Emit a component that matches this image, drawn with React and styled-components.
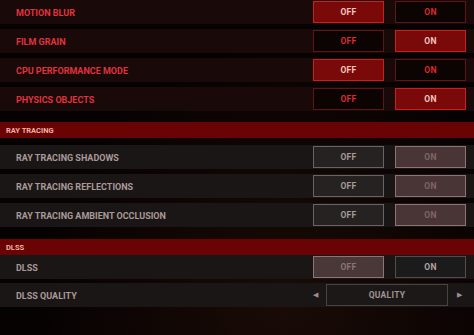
import React from 'react';
import styled, { createGlobalStyle, css } from 'styled-components';

const GlobalStyle = createGlobalStyle`
  html, body {
    margin: 0;
    padding: 0;
    background: #070202;
  }
  body {
    font-family: Roboto, "Liberation Sans", sans-serif;
    width: 474px;
    height: 335px;
    overflow: hidden;
  }
`;

const buttonStyles = {
  on: css`
    background: #7a0a0a;
    border-color: #c81f1f;
    color: #f2c6be;
  `,
  off: css`
    background: #0c0303;
    border-color: #5e1515;
    color: #dc2a2e;
  `,
  dimOff: css`
    background: #262222;
    border-color: #6c6262;
    color: #a89a98;
  `,
  dimOn: css`
    background: #4a3536;
    border-color: #8c7474;
    color: #7e6666;
  `,
  dlssSel: css`
    background: #4a3838;
    border-color: #8a7676;
    color: #8a7474;
  `,
  dlssOn: css`
    background: #1c1b1b;
    border-color: #524c4c;
    color: #b0a4a2;
  `,
};

const labelColors = {
  red: '#e0333c',
  gray: '#a99a98',
};

const rowBgs = {
  red: '#190909',
  gray: '#1b1616',
};

const Page = styled.div`
  display: flex;
  flex-direction: column;
  width: 474px;
  height: 335px;
  background: radial-gradient(ellipse at 60% 90%, #1a0b07 0%, #070202 60%);
`;

const Section = styled.div`
  display: flex;
  flex-direction: column;
  gap: ${(p) => p.$gap}px;
  margin-top: ${(p) => p.$top}px;
`;

const Header = styled.div`
  height: 16px;
  display: flex;
  align-items: center;
  padding-left: 6px;
  background: #6a0404;
  color: #efb2a6;
  font-size: 7.5px;
  font-weight: 700;
  margin-bottom: ${(p) => p.$after}px;
`;

const Row = styled.div`
  height: 24px;
  display: flex;
  align-items: center;
  padding: 0 8px 0 16px;
  background: ${(p) => rowBgs[p.$tone]};
  margin-top: ${(p) => p.$top || 0}px;
`;

const Label = styled.div`
  flex: 1;
  color: ${(p) => labelColors[p.$tone]};
  font-size: 9px;
  font-weight: 700;
  padding-top: 2px;
`;

const Toggles = styled.div`
  display: flex;
  gap: 11px;
`;

const Btn = styled.div`
  width: 69px;
  height: 20px;
  border: 1px solid;
  display: flex;
  align-items: center;
  justify-content: center;
  font-size: 8.5px;
  font-weight: 700;
  letter-spacing: 0.3px;
  ${(p) => buttonStyles[p.$variant]}
`;

const Selector = styled.div`
  display: flex;
  align-items: center;
  gap: 8px;
  margin-right: 4px;
`;

const Arrow = styled.span`
  color: #9a8e8e;
  font-size: 7px;
  width: 6px;
  display: flex;
  justify-content: center;
`;

const SelectBox = styled.div`
  width: 120px;
  height: 20px;
  border: 1px solid #4a4242;
  background: #1d1818;
  color: #a09494;
  display: flex;
  align-items: center;
  justify-content: center;
  font-size: 8.5px;
  font-weight: 700;
  letter-spacing: 0.3px;
`;

const Toggle = ({ offVariant, onVariant }) => (
  <Toggles>
    <Btn $variant={offVariant}>OFF</Btn>
    <Btn $variant={onVariant}>ON</Btn>
  </Toggles>
);

const topSettings = [
  { name: 'MOTION BLUR', value: false },
  { name: 'FILM GRAIN', value: true },
  { name: 'CPU PERFORMANCE MODE', value: false },
  { name: 'PHYSICS OBJECTS', value: true },
];

const rayTracing = ['RAY TRACING SHADOWS', 'RAY TRACING REFLECTIONS', 'RAY TRACING AMBIENT OCCLUSION'];

const App = () => {
  return (
    <>
      <GlobalStyle />
      <Page>
        <Section $gap={5} $top={0}>
          {topSettings.map(({ name, value }) => (
            <Row key={name} $tone="red">
              <Label $tone="red">{name}</Label>
              <Toggle offVariant={value ? 'off' : 'on'} onVariant={value ? 'on' : 'off'} />
            </Row>
          ))}
        </Section>

        <Section $gap={5} $top={11}>
          <Header $after={2}>RAY TRACING</Header>
          {rayTracing.map((name) => (
            <Row key={name} $tone="gray">
              <Label $tone="gray">{name}</Label>
              <Toggle offVariant="dimOff" onVariant="dimOn" />
            </Row>
          ))}
        </Section>

        <Section $gap={0} $top={12}>
          <Header $after={0}>DLSS</Header>
          <Row $tone="gray">
            <Label $tone="gray">DLSS</Label>
            <Toggle offVariant="dlssSel" onVariant="dlssOn" />
          </Row>
          <Row $tone="gray" $top={4}>
            <Label $tone="gray">DLSS QUALITY</Label>
            <Selector>
              <Arrow>◀</Arrow>
              <SelectBox>QUALITY</SelectBox>
              <Arrow>▶</Arrow>
            </Selector>
          </Row>
        </Section>
      </Page>
    </>
  );
};

export default App;
